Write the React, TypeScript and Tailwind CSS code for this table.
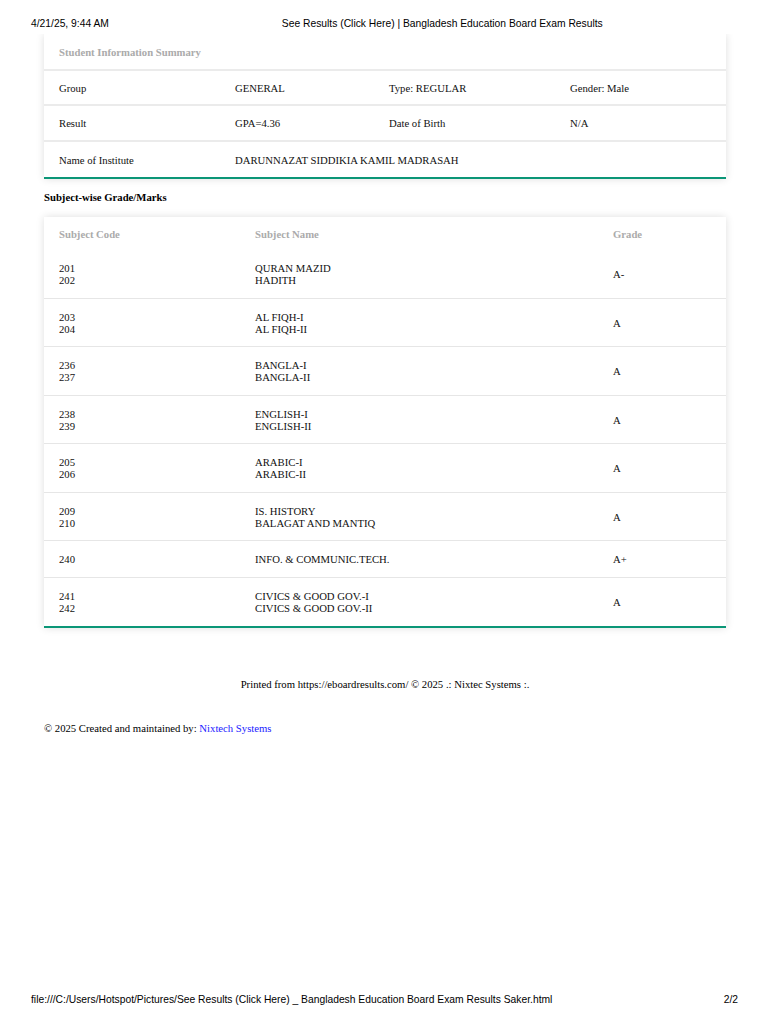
import React from "react";

const serif = { fontFamily: '"Liberation Serif", "Times New Roman", serif' };
const sans = { fontFamily: '"Liberation Sans", Arial, sans-serif' };

const subjects: { codes: string[]; names: string[]; grade: string }[] = [
  { codes: ["201", "202"], names: ["QURAN MAZID", "HADITH"], grade: "A-" },
  { codes: ["203", "204"], names: ["AL FIQH-I", "AL FIQH-II"], grade: "A" },
  { codes: ["236", "237"], names: ["BANGLA-I", "BANGLA-II"], grade: "A" },
  { codes: ["238", "239"], names: ["ENGLISH-I", "ENGLISH-II"], grade: "A" },
  { codes: ["205", "206"], names: ["ARABIC-I", "ARABIC-II"], grade: "A" },
  { codes: ["209", "210"], names: ["IS. HISTORY", "BALAGAT AND MANTIQ"], grade: "A" },
  { codes: ["240"], names: ["INFO. & COMMUNIC.TECH."], grade: "A+" },
  { codes: ["241", "242"], names: ["CIVICS & GOOD GOV.-I", "CIVICS & GOOD GOV.-II"], grade: "A" },
];

export default function App() {
  return (
    <div className="w-[768px] h-[1024px] bg-white text-[#111] relative flex flex-col">
      {/* print header */}
      <div className="flex pl-[31px] pt-[18px] h-[34px] text-[10.3px] leading-[12px] text-black" style={sans}>
        <span>4/21/25, 9:44 AM</span>
        <span className="ml-[173px]">See Results (Click Here) | Bangladesh Education Board Exam Results</span>
      </div>

      <div className="flex-1 flex flex-col" style={serif}>
        {/* Student info card */}
        <div className="pl-[34px] pb-[10px] overflow-hidden">
          <div className="ml-[10px] w-[682px] bg-white shadow-[0_0_8px_rgba(0,0,0,0.13)] border-b-2 border-[#0b9677] text-[10.7px] leading-[12px]">
            <div className="h-[37px] flex items-center pl-[15px] font-bold text-[#ababab] border-b-2 border-[#ebebeb]">
              Student Information Summary
            </div>
            <div className="h-[35px] flex items-center pl-[15px] border-b-2 border-[#ebebeb]">
              <span className="w-[176px]">Group</span>
              <span className="w-[154px]">GENERAL</span>
              <span className="w-[181px]">Type: REGULAR</span>
              <span>Gender: Male</span>
            </div>
            <div className="h-[36px] flex items-center pl-[15px] border-b-2 border-[#ebebeb]">
              <span className="w-[176px]">Result</span>
              <span className="w-[154px]">GPA=4.36</span>
              <span className="w-[181px]">Date of Birth</span>
              <span>N/A</span>
            </div>
            <div className="h-[35px] flex items-center pl-[15px]">
              <span className="w-[176px]">Name of Institute</span>
              <span>DARUNNAZAT SIDDIKIA KAMIL MADRASAH</span>
            </div>
          </div>
        </div>

        <div className="pl-[44px] h-[16px] flex items-center font-bold text-[10.7px] leading-[12px] text-black">
          Subject-wise Grade/Marks
        </div>

        {/* Subjects card */}
        <div className="ml-[44px] w-[682px] mt-[12px] bg-white shadow-[0_0_8px_rgba(0,0,0,0.13)] border-b-2 border-[#0b9677] text-[10.7px] leading-[12px]">
          <div className="h-[33px] flex items-center pl-[15px] font-bold text-[#ababab]">
            <span className="w-[196px]">Subject Code</span>
            <span className="w-[358px]">Subject Name</span>
            <span>Grade</span>
          </div>
          {subjects.map((s, i) => (
            <div
              key={i}
              className={`flex items-center pl-[15px] pt-[12px] pb-[11.5px] ${i < subjects.length - 1 ? "border-b-[1.5px] border-[#e6e6e6]" : "pb-[12px]"}`}
            >
              <div className="w-[196px] flex flex-col">
                {s.codes.map((c) => (
                  <span key={c}>{c}</span>
                ))}
              </div>
              <div className="w-[358px] flex flex-col">
                {s.names.map((n) => (
                  <span key={n}>{n}</span>
                ))}
              </div>
              <span>{s.grade}</span>
            </div>
          ))}
        </div>

        <div className="mt-[50px] text-center text-[10.7px] leading-[12px] text-black pl-[2px]">
          Printed from https://eboardresults.com/ © 2025 .: Nixtec Systems :.
        </div>

        <div className="mt-[32px] pl-[44px] text-[10.7px] leading-[12px] text-black">
          © 2025 Created and maintained by: <span className="text-[#1a1aff]">Nixtech Systems</span>
        </div>
      </div>

      {/* print footer */}
      <div className="flex justify-between pl-[31px] pr-[30px] pb-[18px] text-[10.3px] leading-[12px] text-black" style={sans}>
        <span>file:///C:/Users/Hotspot/Pictures/See Results (Click Here) _ Bangladesh Education Board Exam Results Saker.html</span>
        <span>2/2</span>
      </div>
    </div>
  );
}
